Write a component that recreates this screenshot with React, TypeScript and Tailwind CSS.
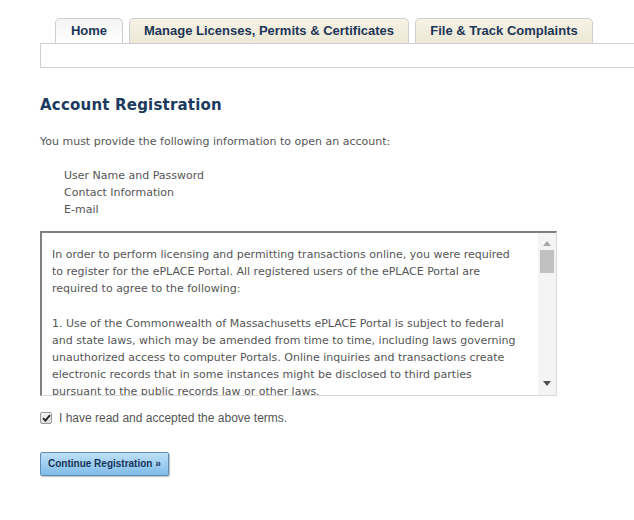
import React, { useState } from 'react';

const tabs = [
  { label: 'Home', active: true, w: 'w-[68px]' },
  { label: 'Manage Licenses, Permits & Certificates', active: false, w: 'w-[280px]' },
  { label: 'File & Track Complaints', active: false, w: 'w-[178px]' },
];

const terms = [
  'In order to perform licensing and permitting transactions online, you were required to register for the ePLACE Portal. All registered users of the ePLACE Portal are required to agree to the following:',
  '1. Use of the Commonwealth of Massachusetts ePLACE Portal is subject to federal and state laws, which may be amended from time to time, including laws governing unauthorized access to computer Portals. Online inquiries and transactions create electronic records that in some instances might be disclosed to third parties pursuant to the public records law or other laws.',
];

export default function App() {
  const [accepted, setAccepted] = useState(true);

  return (
    <div className="w-[634px] h-[520px] overflow-hidden bg-white">
      {/* tab strip */}
      <div className="pl-[55px] pt-[18px] flex gap-[6px] relative z-10">
        {tabs.map((t) => (
          <div
            key={t.label}
            className={`${t.w} h-[25px] flex items-center justify-center rounded-t-[5px] border border-b-0 border-[#cfcfcf] text-[13px] font-bold text-[#1d3557] ${
              t.active ? 'bg-gradient-to-b from-[#f4f4f4] to-white' : 'bg-gradient-to-b from-[#f6f3e6] to-[#ece8d6]'
            }`}
            style={{ fontFamily: '"Liberation Sans", Arial, sans-serif' }}
          >
            {t.label}
          </div>
        ))}
      </div>
      <div className="ml-[40px] w-[620px] h-[25px] border border-[#cfcfcf]" />

      <div className="pl-[40px] text-[#555]" style={{ fontFamily: '"DejaVu Sans", Verdana, sans-serif' }}>
        <h1 className="mt-[26px] text-[15px] font-bold text-[#1b3a5e] tracking-[0.2px]">Account Registration</h1>

        <p className="mt-[16px] text-[11px] leading-[17px]">
          You must provide the following information to open an account:
        </p>

        <ul className="mt-[17px] pl-[24px] text-[11px] leading-[17px]">
          <li>User Name and Password</li>
          <li>Contact Information</li>
          <li>E-mail</li>
        </ul>

        {/* terms box */}
        <div className="mt-[13px] w-[517px] h-[165px] flex border-t-2 border-l-2 border-t-[#808080] border-l-[#808080] border-r border-b border-r-[#d8d8d8] border-b-[#d8d8d8]">
          <div className="flex-1 overflow-hidden pl-[10px] pt-[13px]">
            <div className="w-[466px] text-[11px] leading-[17.2px] text-[#555]">
              {terms.map((p, i) => (
                <p key={i} className={i > 0 ? 'mt-[17.5px]' : ''}>
                  {p}
                </p>
              ))}
            </div>
          </div>
          <div className="w-[18px] bg-[#f4f4f4] flex flex-col items-center py-[6px]">
            <svg width="8" height="5" viewBox="0 0 8 5" className="mt-[2px]">
              <path d="M0 5 L4 0 L8 5 Z" fill="#a8a8a8" />
            </svg>
            <div className="mt-[4px] w-[14px] h-[23px] bg-[#c1c1c1]" />
            <div className="flex-1" />
            <svg width="8" height="5" viewBox="0 0 8 5" className="mb-[3px]">
              <path d="M0 0 L8 0 L4 5 Z" fill="#505050" />
            </svg>
          </div>
        </div>

        <label
          className="mt-[13px] flex items-center gap-[7px] text-[12px] text-[#555] cursor-pointer"
          style={{ fontFamily: '"Liberation Sans", Arial, sans-serif' }}
        >
          <input
            type="checkbox"
            checked={accepted}
            onChange={(e) => setAccepted(e.target.checked)}
            className="sr-only"
          />
          <span className="w-[12px] h-[12px] flex items-center justify-center rounded-[2px] border border-[#9a9a9a] bg-gradient-to-b from-[#f2f2f2] to-[#dcdcdc]">
            {accepted && (
              <svg width="9" height="8" viewBox="0 0 9 8">
                <path d="M1 4.2 L3.4 6.6 L8 1.2" fill="none" stroke="#222" strokeWidth="1.8" />
              </svg>
            )}
          </span>
          I have read and accepted the above terms.
        </label>

        <button
          className="mt-[25px] h-[24px] px-[7px] rounded-[2px] border border-[#5e8db4] bg-gradient-to-b from-[#bfe0f7] to-[#7fbbe8] text-[10px] font-bold text-[#15355a] shadow-[1px_1px_1px_rgba(0,0,0,0.25)]"
          style={{ fontFamily: '"Liberation Sans", Arial, sans-serif' }}
        >
          Continue Registration »
        </button>
      </div>
    </div>
  );
}
